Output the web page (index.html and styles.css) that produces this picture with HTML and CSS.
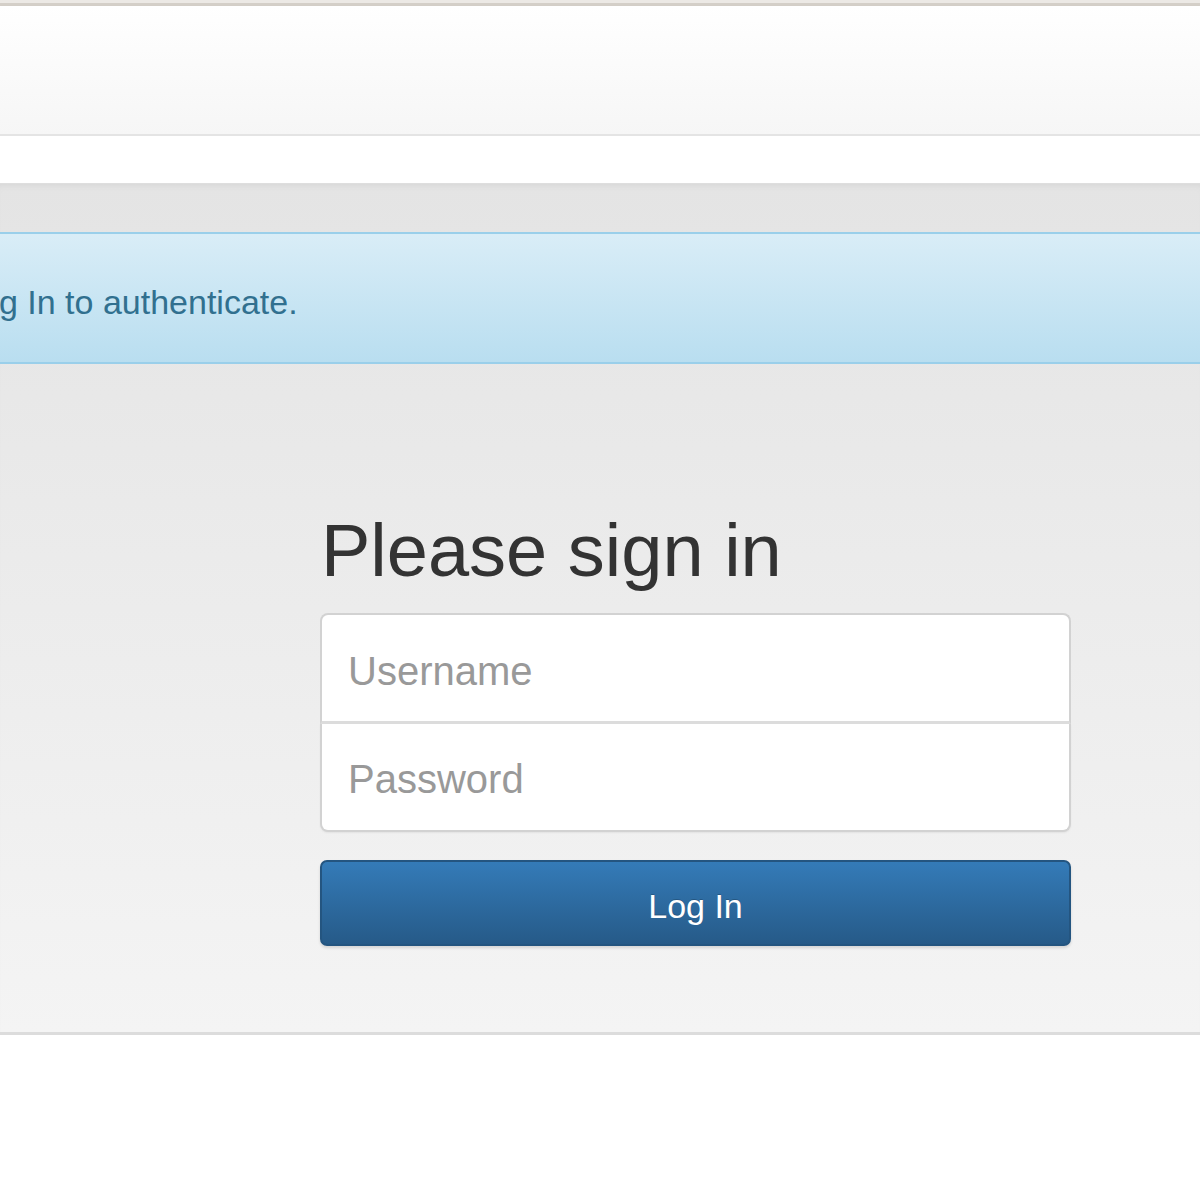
FILE: index.html
```html
<!DOCTYPE html>
<html>
<head>
    <title>Please sign in</title>
    <link rel="stylesheet" href="styles.css">
</head>
<body>
    <div class="topline"></div>
    <div class="navbar"></div>
    <div class="gap"></div>

    <div class="main">
        <div class="alert">Click Log In to authenticate.</div>

        <form class="form-signin" onsubmit="return false;">
            <h2 class="form-signin-heading">Please sign in</h2>
            <input type="text" class="form-control first" placeholder="Username">
            <input type="password" class="form-control last" placeholder="Password">
            <button class="btn-primary" type="submit">Log In</button>
        </form>
    </div>
</body>
</html>
```

FILE: styles.css
```css
html, body { margin: 0; padding: 0; }
body { font-family: "Liberation Sans", Arial, sans-serif; color: #333; background: #fff; overflow: hidden; width: 1200px; height: 1200px; }

.topline { height: 3px; background: #ece9e5; border-bottom: 3px solid #d4cfc8; }
.navbar { height: 128px; background: linear-gradient(#fff 0, #f6f6f6 100%); border-bottom: 2px solid #e4e4e4; box-shadow: 0 2px 4px rgba(0,0,0,0.05); }
.gap { height: 47px; background: #fff; }

.main { background: linear-gradient(#e4e4e4 0, #f4f4f4 100%); border-top: 1px solid #dedede; border-bottom: 3px solid #dcdcdc; padding: 48px 0 86px; box-shadow: inset 0 6px 8px -6px rgba(0,0,0,0.08); }

.alert { margin: 0 -10px; border: 2px solid #9acfea; background: linear-gradient(#d9edf7 0, #b9def0 100%); color: #31708f; font-size: 34px; line-height: 49px; padding: 44px 10px 35px; text-indent: -124px; white-space: nowrap; overflow: hidden; }

.form-signin { width: 751px; margin: 146px 0 0 320px; }
.form-signin-heading { font-size: 74px; font-weight: normal; line-height: 82px; margin: 0 0 21px 1px; color: #333; }

.form-control { display: block; box-sizing: border-box; width: 100%; padding: 6px 26px 0; font-family: "Liberation Sans", Arial, sans-serif; font-size: 40px; color: #555; background: #fff; border: 2px solid #d2d2d2; outline: none; }
.form-control::placeholder { color: #999; }
.form-control.first { height: 111px; border-radius: 8px 8px 0 0; border-bottom: 3px solid #dcdcdc; }
.form-control.last { height: 108px; padding-top: 4px; border-radius: 0 0 8px 8px; border-top: 0; box-shadow: 0 1px 2px rgba(0,0,0,0.06); }

.btn-primary { display: block; width: 100%; height: 86px; margin-top: 28px; padding: 6px 0 0; font-family: "Liberation Sans", Arial, sans-serif; font-size: 34px; color: #fff; background: linear-gradient(#347bb8 0, #265a88 100%); border: 2px solid #245580; border-radius: 7px; text-shadow: 0 -1px 0 rgba(0,0,0,0.2); box-shadow: 0 2px 3px rgba(0,0,0,0.12); cursor: pointer; }
```
